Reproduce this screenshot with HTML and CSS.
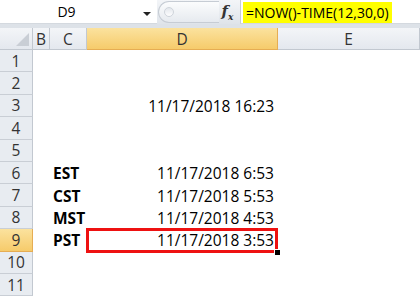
FILE: index.html
```html
<!DOCTYPE html>
<html lang="en">
<head>
    <meta charset="UTF-8">
    <title>Time zones</title>
    <link rel="stylesheet" href="styles.css">
</head>
<body>
    <div class="fbar">
        <div class="namebox">
            <span class="ref">D9</span>
            <span class="arrow"></span>
        </div>
        <div class="mid">
            <div class="grip"><span></span></div>
            <div class="fx"><i>f</i><sub>x</sub></div>
        </div>
        <div class="formula"><span class="hl">=NOW()-TIME(12,30,0)</span></div>
    </div>
    <div class="gap"></div>

    <div class="sheet">
        <div class="corner"></div>
        <div class="col">B</div>
        <div class="col">C</div>
        <div class="col sel">D</div>
        <div class="col">E</div>

        <div class="row">1</div><div></div><div></div><div></div><div></div>
        <div class="row">2</div><div></div><div></div><div></div><div></div>
        <div class="row">3</div><div></div><div></div><div class="num">11/17/2018 16:23</div><div></div>
        <div class="row">4</div><div></div><div></div><div></div><div></div>
        <div class="row">5</div><div></div><div></div><div></div><div></div>
        <div class="row">6</div><div></div><div class="lbl">EST</div><div class="num">11/17/2018 6:53</div><div></div>
        <div class="row">7</div><div></div><div class="lbl">CST</div><div class="num">11/17/2018 5:53</div><div></div>
        <div class="row">8</div><div></div><div class="lbl">MST</div><div class="num">11/17/2018 4:53</div><div></div>
        <div class="row sel">9</div><div></div><div class="lbl">PST</div><div class="num active">11/17/2018 3:53<span class="handle"></span></div><div></div>
        <div class="row">10</div><div></div><div></div><div></div><div></div>
        <div class="row">11</div><div></div><div></div><div></div><div></div>
    </div>
</body>
</html>
```

FILE: styles.css
```css
body {
    margin: 0;
    width: 420px;
    height: 296px;
    overflow: hidden;
    background: #ffffff;
    font-family: "Open Sans", "Liberation Sans", sans-serif;
    color: #000;
}

/* formula bar */
.fbar {
    display: flex;
    height: 24px;
    background: #e3e7ec;
}

.namebox {
    width: 157px;
    background: #fff;
    border-bottom: 1px solid #d4d9df;
    display: flex;
    align-items: center;
    position: relative;
}

.ref {
    flex: 1;
    text-align: center;
    font-size: 14px;
    padding-right: 24px;
}

.arrow {
    position: absolute;
    left: 143px;
    top: 12px;
    border-left: 4px solid transparent;
    border-right: 4px solid transparent;
    border-top: 4px solid #222;
}

.mid {
    width: 83px;
    display: flex;
    align-items: center;
    background: linear-gradient(#f3f5f8, #dfe4ea);
}

.grip {
    width: 60px;
    height: 20px;
    margin-left: 1px;
    border-radius: 11px 0 0 11px;
    border: 1px solid #c6ccd4;
    border-right: none;
    background: linear-gradient(#fbfcfd, #e6eaef);
    display: flex;
    align-items: center;
}

.grip span {
    width: 8px;
    height: 8px;
    margin-left: 5px;
    border-radius: 50%;
    background: linear-gradient(#e3e7ec, #fdfdfe);
    border: 1px solid #cfd4db;
}

.fx {
    flex: 1;
    font-family: "DejaVu Serif", "Liberation Serif", serif;
    font-size: 15px;
    color: #333;
    font-weight: bold;
    text-align: center;
    padding-right: 4px;
}

.fx sub {
    font-size: 9px;
    font-style: italic;
}

.formula {
    flex: 1;
    background: #fff;
    border-left: 1px solid #c6ccd4;
    border-bottom: 1px solid #d4d9df;
    display: flex;
    align-items: center;
    padding-left: 2px;
}

.hl {
    background: #ffff00;
    font-size: 14px;
    line-height: 21px;
    padding: 0 3px 0 3px;
    margin-top: 2px;
}

.gap {
    height: 4px;
    background: #dde2e8;
}

/* sheet grid */
.sheet {
    display: grid;
    grid-template-columns: 33px 17px 37px 191px 1fr;
    grid-template-rows: 22px repeat(11, 22.4px);
    font-size: 15.5px;
}

.corner,
.col,
.row {
    background: linear-gradient(#f3f5f8, #e4e8ee);
    color: #333;
    display: flex;
    align-items: center;
    justify-content: center;
    box-sizing: border-box;
}

.corner {
    border-right: 1px solid #c2c8d0;
    border-bottom: 1px solid #c2c8d0;
    position: relative;
}

.corner::after {
    content: "";
    position: absolute;
    right: 3px;
    bottom: 3px;
    border-left: 13px solid transparent;
    border-bottom: 13px solid #c9ced5;
}

.col {
    border-right: 1px solid #c2c8d0;
    border-bottom: 1px solid #c2c8d0;
}

.row {
    border-right: 1px solid #c2c8d0;
    border-bottom: 1px solid #c9ced5;
    background: #e8ecf1;
}

.col.sel,
.row.sel {
    background: linear-gradient(#fbe29e, #f6cb6b);
    border-right-color: #e6ad53;
    border-bottom-color: #e6ad53;
}

.lbl {
    font-weight: bold;
    display: flex;
    align-items: center;
    padding-left: 3px;
    white-space: nowrap;
}

.num {
    display: flex;
    align-items: center;
    justify-content: flex-end;
    padding-right: 4px;
    white-space: nowrap;
}

.active {
    position: relative;
}

.active::before {
    content: "";
    position: absolute;
    left: -1px;
    top: -1px;
    right: 0;
    bottom: -1px;
    border: 3px solid #ee1111;
}

.handle {
    position: absolute;
    right: -2px;
    bottom: -3px;
    width: 5px;
    height: 5px;
    background: #000;
    border-left: 1px solid #fff;
    border-top: 1px solid #fff;
}
```
